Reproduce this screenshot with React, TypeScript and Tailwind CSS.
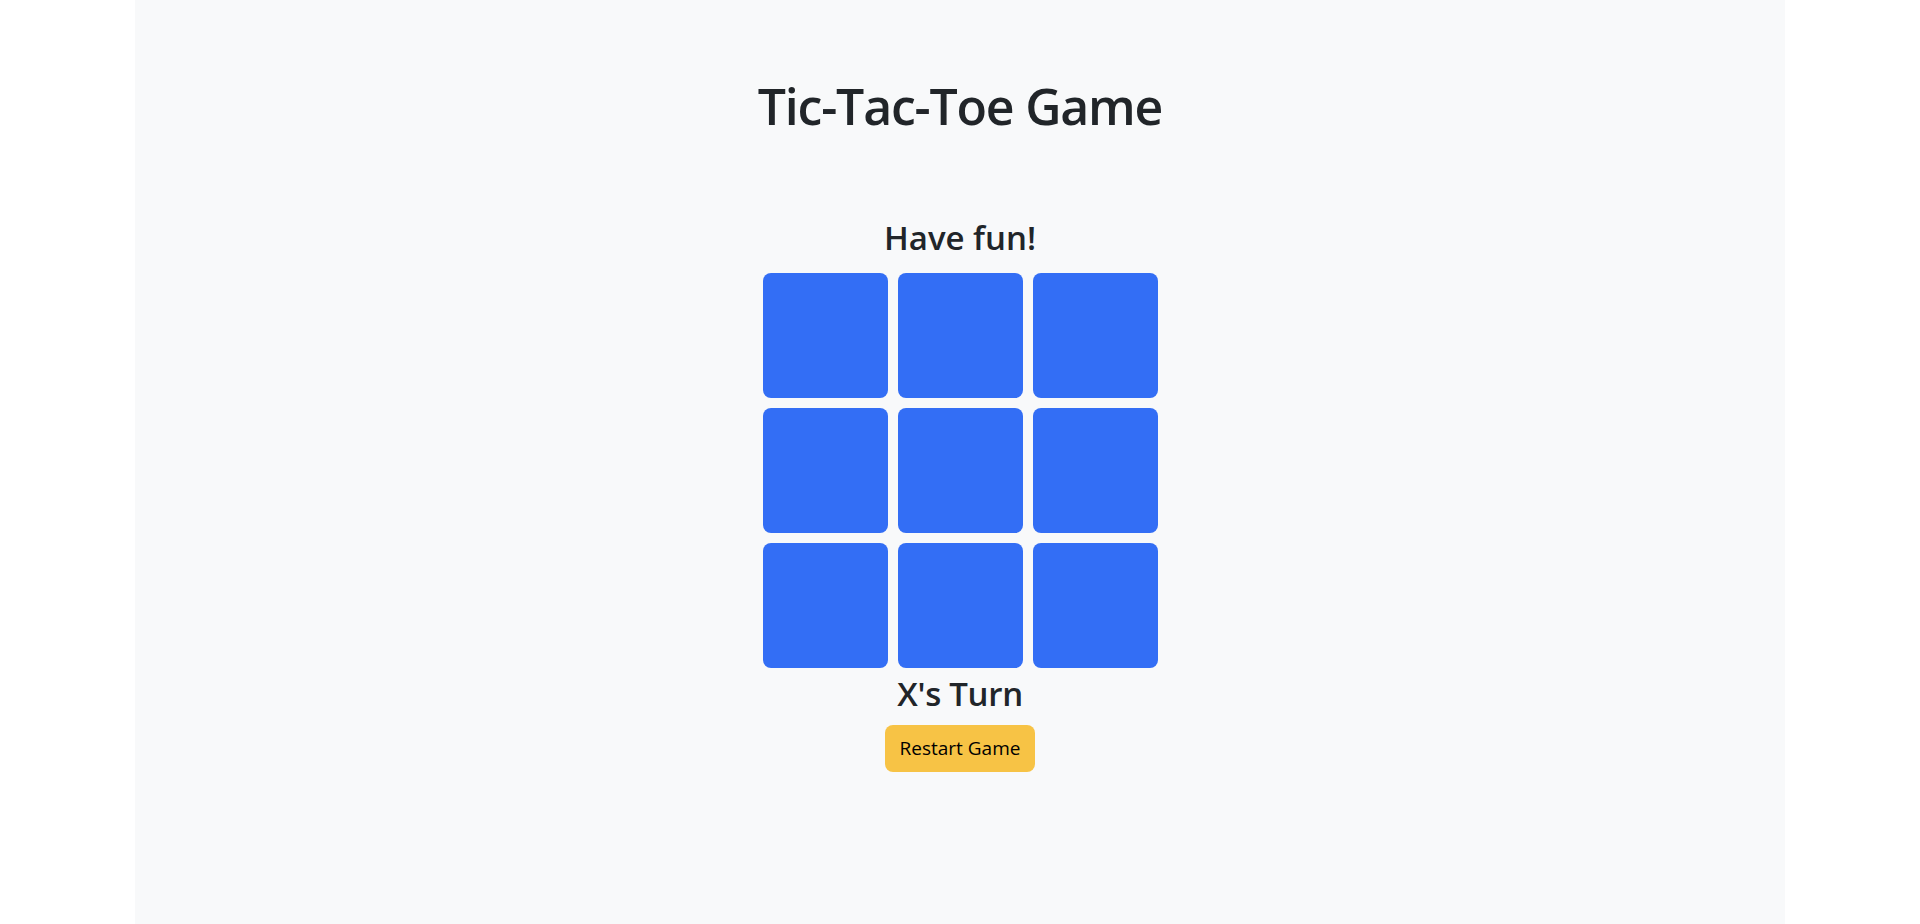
import React, { useState } from 'react';

type Cell = 'X' | 'O' | null;

const lines = [
  [0, 1, 2],
  [3, 4, 5],
  [6, 7, 8],
  [0, 3, 6],
  [1, 4, 7],
  [2, 5, 8],
  [0, 4, 8],
  [2, 4, 6]
];

const findWinner = (board: Cell[]): Cell => {
  for (const [a, b, c] of lines) {
    if (board[a] && board[a] === board[b] && board[a] === board[c]) {
      return board[a];
    }
  }
  return null;
};

export default function App() {
  const [board, setBoard] = useState<Cell[]>(Array(9).fill(null));
  const [xTurn, setXTurn] = useState(true);

  const winner = findWinner(board);
  const full = board.every(Boolean);

  const handleClick = (i: number) => {
    if (board[i] || winner) return;
    const next = [...board];
    next[i] = xTurn ? 'X' : 'O';
    setBoard(next);
    setXTurn(!xTurn);
  };

  const restart = () => {
    setBoard(Array(9).fill(null));
    setXTurn(true);
  };

  let status = `${xTurn ? 'X' : 'O'}'s Turn`;
  if (winner) status = `${winner} Wins!`;
  else if (full) status = "It's a Draw!";

  return (
    <div className="min-h-screen bg-white font-['Open_Sans','Noto_Sans',sans-serif] text-[#212529]">
      <div className="mx-auto flex min-h-screen w-[1650px] flex-col items-center bg-[#f8f9fa] pt-[76px]">
        <h1 className="text-[50px] font-semibold leading-[60px] tracking-[-1.2px]">Tic-Tac-Toe Game</h1>

        <h2 className="mt-[82px] text-[33px] font-semibold leading-[40px]">Have fun!</h2>

        {/* 3x3 board */}
        <div className="mt-[15px] grid grid-cols-3 gap-[10px]">
          {board.map((cell, i) => (
            <button
              key={i}
              type="button"
              onClick={() => handleClick(i)}
              className="flex h-[125px] w-[125px] items-center justify-center rounded-[8px] bg-[#336ef5] text-[64px] font-semibold text-white"
            >
              {cell}
            </button>
          ))}
        </div>

        <h2 className="mt-[6px] text-[33px] font-semibold leading-[40px] tracking-[-0.3px]">{status}</h2>

        <button
          type="button"
          onClick={restart}
          className="mt-[11px] h-[47px] w-[150px] rounded-[8px] bg-[#f7c345] text-[19px] text-black"
        >
          Restart Game
        </button>
      </div>
    </div>
  );
}
